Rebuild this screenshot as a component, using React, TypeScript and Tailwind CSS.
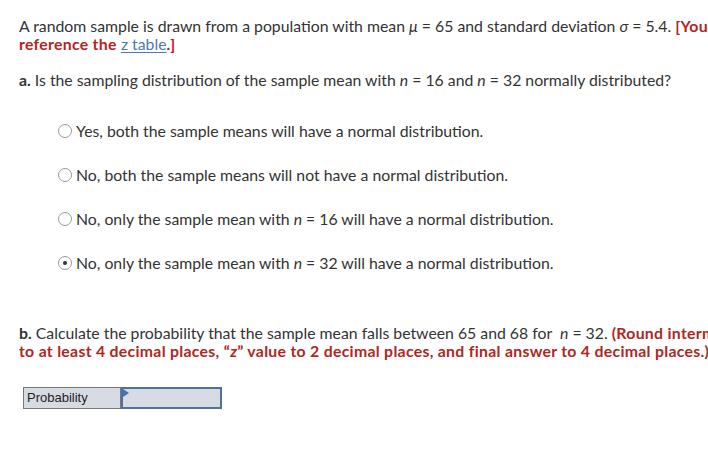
import React from 'react';

const options = [
  { text: <>Yes, both the sample means will have a normal distribution.</>, checked: false },
  { text: <>No, both the sample means will not have a normal distribution.</>, checked: false },
  {
    text: (
      <>
        No, only the sample mean with <i>n</i> = 16 will have a normal distribution.
      </>
    ),
    checked: false,
  },
  {
    text: (
      <>
        No, only the sample mean with <i>n</i> = 32 will have a normal distribution.
      </>
    ),
    checked: true,
  },
];

function Radio({ checked }: { checked: boolean }) {
  return (
    <span className="w-[14px] h-[14px] rounded-full border border-[#9a9a9a] bg-white flex items-center justify-center shrink-0">
      {checked && <span className="w-[4px] h-[4px] rounded-full bg-[#333]" />}
    </span>
  );
}

export default function App() {
  return (
    <div className="w-[708px] h-[450px] overflow-hidden bg-white font-['Lato',sans-serif] text-[15.8px] text-[#333] pl-[19px] pt-[17px]">
      {/* Intro */}
      <p className="leading-[18px] whitespace-nowrap">
        A random sample is drawn from a population with mean <i>μ</i> = 65 and standard deviation <i>σ</i> = 5.4.{' '}
        <b className="text-[#b0261e] tracking-[0.3px]">[You must</b>
        <br />
        <b className="text-[#b0261e] tracking-[0.3px]">reference the </b>
        <a className="text-[#4b79b5] underline underline-offset-2">z table</a>
        <b className="text-[#b0261e]">.]</b>
      </p>

      {/* Part a */}
      <p className="mt-[18px] leading-[18px] whitespace-nowrap">
        <b>a.</b> Is the sampling distribution of the sample mean with <i>n</i> = 16 and <i>n</i> = 32 normally
        distributed?
      </p>

      <div className="mt-[33px] pl-[39px] flex flex-col gap-[26px]">
        {options.map((o, i) => (
          <label key={i} className="h-[18px] flex items-center gap-[4px] whitespace-nowrap">
            <Radio checked={o.checked} />
            <span className="leading-[18px]">{o.text}</span>
          </label>
        ))}
      </div>

      {/* Part b */}
      <p className="mt-[52px] leading-[18px] whitespace-nowrap">
        <b>b.</b> Calculate the probability that the sample mean falls between 65 and 68 for&nbsp; <i>n</i> = 32.{' '}
        <b className="text-[#b0261e] tracking-[0.3px]">(Round intermediate calculations</b>
        <br />
        <b className="text-[#b0261e] tracking-[0.3px]">
          to at least 4 decimal places, “<i>z</i>” value to 2 decimal places, and final answer to 4 decimal places.)
        </b>
      </p>

      <div className="mt-[27px] ml-[4px] flex h-[22px] w-[199px] font-['Liberation_Sans',sans-serif] text-[13px]">
        <div className="w-[98px] bg-[#d7dbe4] border border-[#777] flex items-center px-[3px] text-[#222]">
          Probability
        </div>
        <div className="relative flex-1 bg-[#d7dbe4] border-2 border-[#52709c]">
          <span className="absolute left-0 top-0 w-0 h-0 border-t-[4px] border-b-[4px] border-l-[6px] border-t-transparent border-b-transparent border-l-[#3d74c0]" />
        </div>
      </div>
    </div>
  );
}
